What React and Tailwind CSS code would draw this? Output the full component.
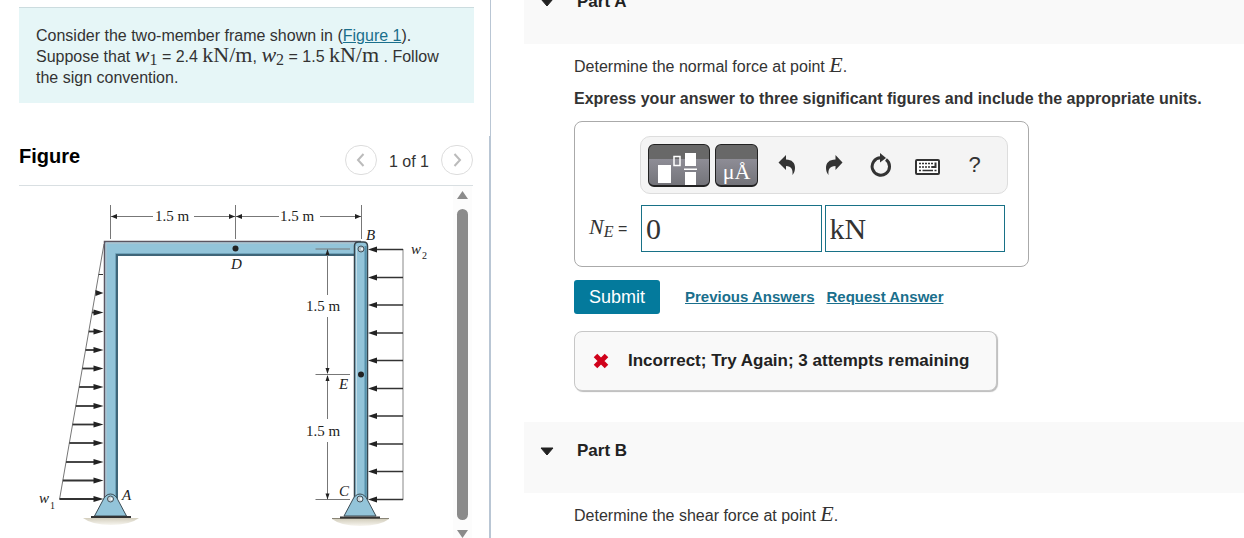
import React, { useState } from 'react';

const LEFT_ARROWS = [274.5, 293, 312.5, 331.5, 350, 368.5, 387, 406, 424.5, 443, 462, 480.5, 499];
const RIGHT_ARROWS = [249.5, 277.5, 305, 333, 360.5, 388.5, 416, 444, 471.5, 499.5];

// x position of the sloped load line at height y
const slopeX = (y) => 104 - ((y - 244) / 255.5) * 44.5;

const Caret = () => (
    <svg width="14" height="9" viewBox="0 0 14 9" aria-hidden="true">
        <path d="M1 1h12L7 8z" fill="#222" stroke="#222" strokeLinejoin="round" />
    </svg>
);

const Support = ({ x }) => (
    <g>
        <path d={`M${x - 8} 501 Q${x - 5} 494 ${x} 494 Q${x + 5} 494 ${x + 8} 501 L${x + 16} 516 H${x - 16} Z`} fill="#93c4d9" stroke="#3c4c55" />
        <circle cx={x} cy="499" r="3" fill="#c9d3d8" stroke="#45525a" />
        <circle cx={x + 1} cy="499" r="1" fill="#fff" />
    </g>
);

const FrameDiagram = () => (
    <svg viewBox="19 186 434 352" className="block w-[434px] h-[352px] font-['Liberation_Serif',serif]" role="img" aria-label="Two-member frame">
        <defs>
            <linearGradient id="ground" x1="0" y1="0" x2="0" y2="1">
                <stop offset="0" stopColor="#d3cebd" />
                <stop offset="1" stopColor="#f7f5ef" />
            </linearGradient>
        </defs>

        {/* dimension lines */}
        <g stroke="#777" strokeWidth="1" fill="none">
            <path d="M110.5 205V239M235.5 205V239M361.5 205V239" />
            <path d="M111 216.5H153M194 216.5H279M320 216.5H361" />
        </g>
        <g fill="#222">
            <path d="M111 216.5l6-2.5v5zM235 216.5l-6-2.5v5zM236 216.5l6-2.5v5zM361 216.5l-6-2.5v5z" />
        </g>

        {/* linear load on the left column */}
        <path d="M104 244L59.5 499.5" stroke="#777" fill="none" />
        {LEFT_ARROWS.map((y, idx) => (
            <g key={y}>
                {idx > 1 && <path d={`M${slopeX(y)} ${y}H97`} stroke="#333" strokeWidth="1.8" />}
                {idx === 0 && <path d={`M${slopeX(y)} ${y}H103`} stroke="#333" />}
                {idx > 0 && <path d={`M103.5 ${y}l${idx === 1 ? -8 : -10} -3v6z`} fill="#222" />}
            </g>
        ))}

        {/* corner member A-D-B */}
        <path d="M104 241.5H361V255H117V499H104Z" fill="#93c4d9" />
        <path d="M117 499V255H356" stroke="#3f6578" strokeWidth="2" fill="none" />
        <path d="M115.5 497V253.5H356" stroke="#6fa3ba" strokeWidth="1" fill="none" />
        <path d="M104.5 500V241.5H361" stroke="#5b5560" strokeWidth="1.5" fill="none" />
        <path d="M106 498V243H355" stroke="#b9c3cc" strokeWidth="1" fill="none" />

        {/* member B-E-C */}
        <path d="M354.5 499V246Q354.5 242 358.5 242H363.5Q367.5 242 367.5 246V499Z" fill="#93c4d9" stroke="#37444c" strokeWidth="1.5" />
        <path d="M356.5 497V246" stroke="#c3dde8" />
        <path d="M365.5 497V246" stroke="#5591ab" strokeWidth="2" />
        <circle cx="361" cy="249" r="3" fill="#b8c4ca" stroke="#45525a" />
        <circle cx="362" cy="249" r="1" fill="#fff" />

        <g stroke="#777" strokeWidth="1" fill="none">
            <path d="M315.5 249H350M315.5 374.5H350M315.5 499.5H350" />
            <path d="M327.5 250V295M327.5 317V373M327.5 376V419M327.5 442V499" />
        </g>
        <g fill="#222">
            <path d="M327.5 249l-2 6h4zM327.5 374l-2-6h4zM327.5 375l-2 6h4zM327.5 499.5l-2-6h4z" />
        </g>

        {/* uniform load on the right column */}
        <path d="M403 249V500" stroke="#888" fill="none" />
        {RIGHT_ARROWS.map((y) => (
            <g key={y}>
                <path d={`M376 ${y}H403`} stroke="#333" strokeWidth="1.5" />
                <path d={`M368 ${y}l9 -3v6z`} fill="#222" />
            </g>
        ))}

        <path d="M83 518H139Q130 525 111 525Q92 525 83 518Z" fill="url(#ground)" />
        <path d="M332 519H389Q380 526 360 526Q341 526 332 519Z" fill="url(#ground)" />
        <path d="M332 518.5H389" stroke="#8a8577" />
        <Support x={110.5} />
        <Support x={360} />
        <path d="M91 517H131M340 517.5H380" stroke="#333" strokeWidth="2" />

        <circle cx="235.5" cy="248.5" r="3" fill="#222" />
        <circle cx="361" cy="374.5" r="3" fill="#222" />

        <g fill="#222" fontSize="15">
            <text x="155" y="221">1.5 m</text>
            <text x="280" y="221">1.5 m</text>
            <text x="306" y="311">1.5 m</text>
            <text x="306" y="436">1.5 m</text>
        </g>
        <g fill="#222" fontSize="15" fontStyle="italic">
            <text x="366" y="240">B</text>
            <text x="231" y="269">D</text>
            <text x="339" y="389">E</text>
            <text x="339" y="496">C</text>
            <text x="122" y="500">A</text>
            <text x="39" y="503">w</text>
            <text x="411" y="254">w</text>
        </g>
        <g fill="#222" fontSize="10">
            <text x="50" y="509">1</text>
            <text x="422" y="259">2</text>
        </g>
    </svg>
);

const MathVar = ({ children, sub }) => (
    <span className="font-['Liberation_Serif',serif] text-[22px] leading-[0] italic">
        {children}
        {sub && <sub className="text-[16px] not-italic bottom-[-3px]">{sub}</sub>}
    </span>
);

const Unit = ({ children }) => (
    <span className="font-['Liberation_Serif',serif] text-[22px] leading-[0]">{children}</span>
);

const PartHeader = ({ title }) => (
    <header className="h-[71px] bg-[#f9f9f9] pl-4 pt-[18px]">
        <button className="flex items-center gap-[23px] text-[17px] leading-[22px] font-bold text-[#222]">
            <Caret />
            {title}
        </button>
    </header>
);

const ToolButton = ({ label, children }) => (
    <button aria-label={label} className="w-[47px] h-[43px] flex items-center justify-center text-[#333]">
        {children}
    </button>
);

const Toolbar = () => (
    <div className="flex items-center h-[58px] pl-[7px] bg-[#f4f4f4] border border-[#ddd] rounded-[10px]">
        <button
            aria-label="Templates"
            className="w-[62px] h-[43px] mr-[5px] rounded-[6px] border border-[#222] border-b-2 bg-linear-to-b from-[#686868] from-35% via-[#8e8d96] via-35% to-[#74747a]"
        >
            <svg width="60" height="40" viewBox="0 0 60 40">
                <rect x="9" y="20" width="13" height="18" fill="#fff" />
                <rect x="25" y="11.5" width="6" height="9" fill="none" stroke="#fff" strokeWidth="1.5" />
                <rect x="36" y="8" width="11" height="13" fill="#fff" />
                <rect x="35" y="23.500" width="13" height="1.5" fill="#fff" />
                <rect x="36" y="27" width="11" height="13" fill="#fff" />
            </svg>
        </button>
        <button
            aria-label="Symbols"
            className="w-[43px] h-[43px] mr-[5px] pt-[14px] rounded-[6px] border border-[#222] border-b-2 bg-linear-to-b from-[#686868] from-35% via-[#8e8d96] via-35% to-[#74747a] font-['Liberation_Serif',serif] text-[22px] leading-[26px] text-white"
        >
            μÅ
        </button>
        <ToolButton label="Undo">
            <svg width="18" height="22" viewBox="0 0 18 22">
                <path d="M0.5 8.5L8 1v4.500C14 5.500 17 9 17 14c0 3-1 5-2.500 7C15 15.500 13.500 12 8 12v4z" fill="#333" />
            </svg>
        </ToolButton>
        <ToolButton label="Redo">
            <svg width="18" height="22" viewBox="0 0 18 22">
                <path d="M17.500 8.500L10.500 1v4.500C4 5.500 1 9 1 14c0 3 1 5 2.500 7C3 15.500 4.500 12 10.500 12v4z" fill="#333" />
            </svg>
        </ToolButton>
        <ToolButton label="Reset">
            <svg width="22" height="24" viewBox="0 0 22 24">
                <path d="M16 6.500A8.700 8.700 0 1 1 10.500 4.800" fill="none" stroke="#333" strokeWidth="3" />
                <path d="M10 0l6 5-6 4.500z" fill="#333" />
            </svg>
        </ToolButton>
        <ToolButton label="Keyboard shortcuts">
            <svg width="25" height="20" viewBox="0 0 25 20">
                <rect x="1" y="5" width="23" height="14" rx="1" fill="#fff" stroke="#333" strokeWidth="2" />
                <path d="M4 8.500H19M4 12H17" stroke="#333" strokeWidth="1.5" strokeDasharray="2 1" />
                <path d="M20.500 7.500V12H17" stroke="#333" strokeWidth="2" fill="none" />
                <path d="M4 15.500h2M7.500 15.500h10.500M19.500 15.500h2" stroke="#333" strokeWidth="1.5" />
            </svg>
        </ToolButton>
        <ToolButton label="Help">
            <span className="text-[22px] leading-none">?</span>
        </ToolButton>
    </div>
);

const AnswerBox = () => {
    const [value, setValue] = useState('0');
    const [unit, setUnit] = useState('kN');
    const field = "min-w-0 w-full h-[47px] px-1 bg-white border border-[#187187] outline-none font-['Liberation_Serif',serif] text-[30px] leading-[45px] text-[#333]";

    return (
        <div className="max-w-[455px] h-[146px] pt-[14px] pl-[14px] pr-[20px] border border-[#aaa] rounded-[8px]">
            <div className="ml-[51px]">
                <Toolbar />
            </div>
            <div className="flex items-center mt-[11px] pr-[3px]">
                <label htmlFor="answer-value" className="w-[52px] shrink-0 text-[#333]">
                    <MathVar>N<sub className="text-[16px] bottom-[-3px]">E</sub></MathVar> =
                </label>
                <div className="grid grid-cols-2 flex-1 min-w-0 gap-[3px]">
                    <input id="answer-value" className={field} value={value} onChange={(e) => setValue(e.target.value)} />
                    <input aria-label="Units" className={field} value={unit} onChange={(e) => setUnit(e.target.value)} />
                </div>
            </div>
        </div>
    );
};

const Pager = () => (
    <div className="flex items-center gap-3 pt-[2px]">
        <button aria-label="Previous figure" className="w-8 h-[30px] mb-1 rounded-full border border-[#ddd] flex items-center justify-center">
            <svg width="9" height="14" viewBox="0 0 9 14"><path d="M7.5 1L2 7l5.5 6" fill="none" stroke="#bbb" strokeWidth="2" /></svg>
        </button>
        <span className="text-[#333]">1 of 1</span>
        <button aria-label="Next figure" className="w-8 h-[30px] mb-1 rounded-full border border-[#ddd] flex items-center justify-center">
            <svg width="9" height="14" viewBox="0 0 9 14"><path d="M1.5 1L7 7l-5.5 6" fill="none" stroke="#bbb" strokeWidth="2" /></svg>
        </button>
    </div>
);

const ProblemPanel = () => (
    <aside className="w-[491px] shrink-0 flex flex-col border-r border-[#b9c6d4]">
        <div className="mt-[7px] ml-[19px] mr-[16px] h-[96px] px-[17px] pt-[17px] bg-[#e6f6f7] border-t border-[#ccdcdf] leading-[21px] text-[#333]">
            Consider the two-member frame shown in (<a href="#figure" className="text-[#1a6f8c] underline">Figure 1</a>).
            <br />
            Suppose that <MathVar sub="1">w</MathVar> = 2.4 <Unit>kN/m</Unit>, <MathVar sub="2">w</MathVar> = 1.5 <Unit>kN/m</Unit> . Follow
            <br />
            the sign convention.
        </div>
        <section id="figure" className="mt-[33px] flex-1 min-h-0 flex flex-col pl-[19px] border-r border-[#b9c6d4]">
            <div className="flex items-center justify-between h-[50px] mr-[16px] border-b border-[#d9dfe2]">
                <h2 className="text-[20px] leading-[24px] font-bold text-black mb-[10px]">Figure</h2>
                <Pager />
            </div>
            <div className="flex flex-1 min-h-0 overflow-hidden">
                <FrameDiagram />
                <div className="w-[19px] h-[352px] flex flex-col items-center justify-between bg-[#fcfcfc] pt-[5px]">
                    <svg width="11" height="8" viewBox="0 0 11 8"><path d="M0 8L5.5 0 11 8z" fill="#8b8b8b" /></svg>
                    <div className="w-[11px] h-[311px] rounded-full bg-[#8b8b8b]" />
                    <svg width="11" height="8" viewBox="0 0 11 8"><path d="M0 0h11L5.5 8z" fill="#8b8b8b" /></svg>
                </div>
            </div>
        </section>
    </aside>
);

const App = () => {
    return (
        <div className="flex h-screen overflow-hidden bg-white font-['Liberation_Sans',Arial,sans-serif] text-[16px] leading-[20px]">
            <ProblemPanel />
            <main className="flex-1 min-w-0 pl-[33px] overflow-hidden">
                <section className="-mt-[27px]">
                    <PartHeader title="Part A" />
                    <div className="pl-[50px] pt-[13px] pb-[31px]">
                        <p className="text-[#333]">Determine the normal force at point <MathVar>E</MathVar>.</p>
                        <p className="mt-3 mb-3 font-bold text-[#333]">
                            Express your answer to three significant figures and include the appropriate units.
                        </p>
                        <AnswerBox />
                        <div className="flex items-center mt-[13px]">
                            <button className="w-[86px] h-[34px] rounded-[3px] bg-[#047a9c] text-[18px] text-white">Submit</button>
                            <a href="#previous" className="ml-[25px] text-[15px] font-bold text-[#1a6f8c] underline">Previous Answers</a>
                            <a href="#request" className="ml-3 text-[15px] font-bold text-[#1a6f8c] underline">Request Answer</a>
                        </div>
                        <div role="status" className="flex w-fit items-center gap-[18px] mt-[17px] h-[60px] pl-[17px] pr-[27px] bg-[#f9f9f9] border border-[#c7c7c7] rounded-[8px] shadow-[1px_1px_1px_#bbb] text-[17px] font-bold text-[#222]">
                            <svg width="18" height="18" viewBox="0 0 18 18">
                                <path d="M3.5 3.5l11 11M14.5 3.5l-11 11" stroke="#d0021b" strokeWidth="5" />
                            </svg>
                            Incorrect; Try Again; 3 attempts remaining
                        </div>
                    </div>
                </section>
                <section>
                    <PartHeader title="Part B" />
                    <div className="pl-[50px] pt-[13px]">
                        <p className="text-[#333]">Determine the shear force at point <MathVar>E</MathVar>.</p>
                    </div>
                </section>
            </main>
        </div>
    );
};

export default App;
